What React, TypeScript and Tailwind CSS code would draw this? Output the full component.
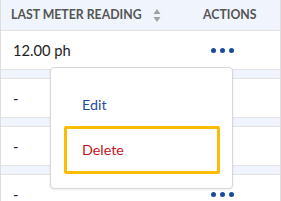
import React from "react";

function Dots() {
  return (
    <div className="flex items-center gap-[4px]">
      <span className="block w-[5px] h-[5px] rounded-full bg-[#1b4c9c]" />
      <span className="block w-[5px] h-[5px] rounded-full bg-[#1b4c9c]" />
      <span className="block w-[5px] h-[5px] rounded-full bg-[#1b4c9c]" />
    </div>
  );
}

function Row({ value, dots }: { value: string; dots: boolean }) {
  return (
    <>
      <div className="flex h-[39px] items-center border-b border-[#e3e3e3] bg-white">
        <div className="w-[192px] pl-[12px] text-[14.7px] text-[#222]">{value}</div>
        <div className="flex-1 pl-[18px]">{dots ? <Dots /> : null}</div>
      </div>
      <div className="h-[9px] border-b border-[#e3e3e3] bg-[#f0f5fd]" />
    </>
  );
}

export default function App() {
  return (
    <div
      className="relative w-[281px] h-[201px] overflow-hidden bg-white"
      style={{ fontFamily: "Lato, 'Noto Sans', sans-serif" }}
    >
      <div className="w-[281px] border-l border-r border-[#dedede]">
        <div className="flex h-[31px] items-center border-b border-[#e3e3e3] bg-[#f0f5fd]">
          <div className="flex w-[192px] items-center pl-[10px] text-[12.3px] font-bold text-[#555]">
            LAST METER READING
            <svg width="8" height="13" viewBox="0 0 8 13" className="ml-[11px]">
              <path d="M4 0 L7.5 5 L0.5 5 Z" fill="#a0a0a0" />
              <path d="M4 13 L7.5 8 L0.5 8 Z" fill="#a0a0a0" />
            </svg>
          </div>
          <div className="flex-1 pl-[10px] text-[12.3px] font-bold text-[#555]">ACTIONS</div>
        </div>
        <Row value="12.00 ph" dots />
        <Row value="-" dots={false} />
        <Row value="-" dots={false} />
        <Row value="-" dots />
      </div>

      <div className="absolute left-[50px] top-[67px] w-[183px] rounded-[4px] border border-[#d8d8d8] bg-white shadow-[0_1px_3px_rgba(0,0,0,0.08)]">
        <div className="pt-[26px] pl-[31px] h-[48px] leading-[22px] text-[14.3px] text-[#1f4e9c]">Edit</div>
        <div className="ml-[13px] mt-[10px] mb-[14px] flex h-[48px] w-[156px] items-center rounded-[2px] border-[3px] border-[#fbbc05] pl-[15px] text-[14.3px] text-[#c0141c]">
          Delete
        </div>
      </div>
    </div>
  );
}
